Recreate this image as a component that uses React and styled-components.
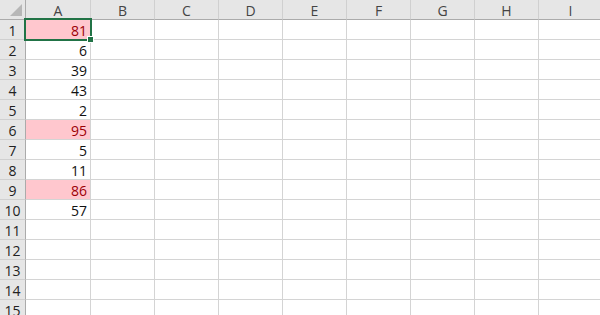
import React from "react";
import styled, { createGlobalStyle } from "styled-components";

const Global = createGlobalStyle`
  html, body { margin: 0; padding: 0; background: #fff; }
  body { font-family: "Open Sans", "Liberation Sans", sans-serif; }
`;

const Sheet = styled.div`
  display: grid;
  grid-template-columns: 26px 65px repeat(8, 64px);
  grid-auto-rows: 20px;
  width: 600px;
  height: 315px;
  overflow: hidden;
`;

const Corner = styled.div`
  position: relative;
  background: #e6e6e6;
  border-right: 1px solid #ababab;
  border-bottom: 1px solid #ababab;
  box-sizing: border-box;
  &::after {
    content: "";
    position: absolute;
    right: 3px;
    bottom: 3px;
    width: 0;
    height: 0;
    border-left: 12px solid transparent;
    border-bottom: 12px solid #b7b7b7;
  }
`;

const ColHead = styled.div`
  background: #e6e6e6;
  border-right: 1px solid #d0d0d0;
  border-bottom: 1px solid #ababab;
  box-sizing: border-box;
  display: flex;
  align-items: center;
  justify-content: center;
  font-size: 14px;
  color: #444;
  padding-top: 1px;
`;

const RowHead = styled.div`
  background: #e6e6e6;
  border-right: 1px solid #ababab;
  border-bottom: 1px solid #d0d0d0;
  box-sizing: border-box;
  display: flex;
  align-items: center;
  justify-content: center;
  font-size: 14px;
  color: #222;
  padding-top: 1px;
`;

const Cell = styled.div`
  position: relative;
  background: ${(p) => (p.$hot ? "#ffc7ce" : "#fff")};
  color: ${(p) => (p.$hot ? "#9c0006" : "#111")};
  border-right: 1px solid #d4d4d4;
  border-bottom: 1px solid #d4d4d4;
  box-sizing: border-box;
  display: flex;
  align-items: center;
  justify-content: flex-end;
  padding-right: 3px;
  padding-top: 1px;
  font-size: 14px;
`;

const Selection = styled.div`
  position: absolute;
  left: -2px;
  top: -2px;
  right: -2px;
  bottom: -2px;
  border: 2px solid #217346;
  pointer-events: none;
  &::after {
    content: "";
    position: absolute;
    right: -4px;
    bottom: -4px;
    width: 5px;
    height: 5px;
    background: #217346;
    border: 1px solid #fff;
  }
`;

const cols = ["A", "B", "C", "D", "E", "F", "G", "H", "I"];
const values = [81, 6, 39, 43, 2, 95, 5, 11, 86, 57];
const hot = (v) => v > 80;

export default function App() {
  const rows = Array.from({ length: 15 }, (_, i) => i + 1);
  return (
    <>
      <Global />
      <Sheet>
        <Corner />
        {cols.map((c) => (
          <ColHead key={c}>{c}</ColHead>
        ))}
        {rows.map((r) => {
          const v = values[r - 1];
          return (
            <React.Fragment key={r}>
              <RowHead>{r}</RowHead>
              {cols.map((c) =>
                c === "A" ? (
                  <Cell key={c} $hot={v !== undefined && hot(v)} style={r === 1 ? { zIndex: 2 } : undefined}>
                    {v}
                    {r === 1 && <Selection />}
                  </Cell>
                ) : (
                  <Cell key={c} />
                )
              )}
            </React.Fragment>
          );
        })}
      </Sheet>
    </>
  );
}
